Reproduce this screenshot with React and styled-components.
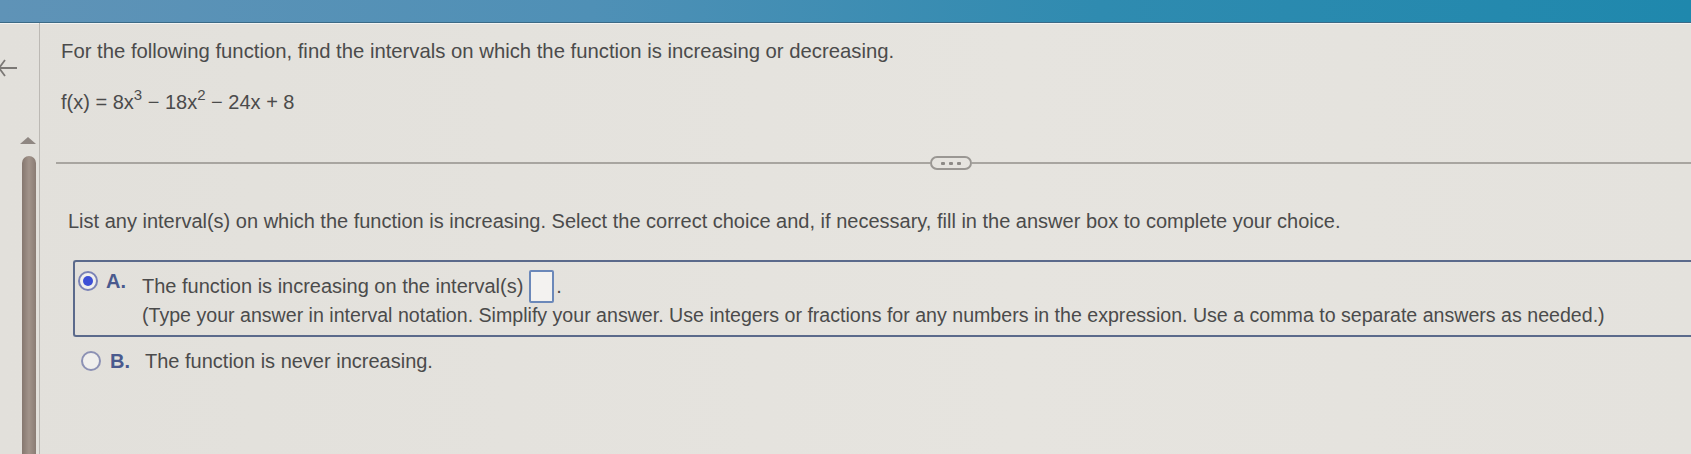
import React from 'react';
import styled, { createGlobalStyle } from 'styled-components';

const Global = createGlobalStyle`
  html, body { margin: 0; padding: 0; height: 100%; }
  body { background: #e4e2dd; font-family: "Liberation Sans", Arial, sans-serif; overflow: hidden; }
  #root { height: 100%; }
`;

const Shell = styled.div`
  width: 1691px;
  height: 454px;
  display: flex;
  flex-direction: column;
  background: linear-gradient(90deg, #e2e0db 0%, #e6e4df 60%, #e4e2dd 100%);
`;

const TopBar = styled.div`
  height: 22px;
  flex-shrink: 0;
  background: linear-gradient(90deg, #5f93b7 0%, #4f90b6 35%, #2f8bb0 65%, #1f88ad 100%);
  border-bottom: 1px solid #3c6a86;
  box-shadow: 0 1px 0 #f4f4f2;
`;

const Body = styled.div`
  flex: 1;
  display: flex;
  min-height: 0;
`;

const Gutter = styled.div`
  width: 40px;
  flex-shrink: 0;
  border-right: 1.5px solid #bcb9b4;
  display: flex;
  flex-direction: column;
  padding-top: 34px;
  box-sizing: border-box;
`;

const BackArrow = styled.div`
  margin-left: -3px;
  width: 22px;
  height: 22px;
`;

const UpTriangle = styled.div`
  margin: 58px 0 0 20px;
  width: 0;
  height: 0;
  border-left: 8px solid transparent;
  border-right: 8px solid transparent;
  border-bottom: 7px solid #8f8782;
`;

const Thumb = styled.div`
  margin: 12px 0 0 22px;
  width: 14px;
  flex: 1;
  border-radius: 7px 7px 0 0;
  background: linear-gradient(90deg, #85776f 0%, #a1938a 50%, #8a7c74 100%);
`;

const Main = styled.div`
  flex: 1;
  min-width: 0;
  padding: 16px 0 0 21px;
  color: #4b4b4b;
  font-size: 20px;
`;

const Prompt = styled.p`
  margin: 0;
  line-height: 24px;
  font-size: 20.3px;
`;

const Formula = styled.p`
  margin: 27px 0 0;
  line-height: 24px;
  sup { font-size: 15px; vertical-align: 9px; line-height: 0; }
`;

const Divider = styled.div`
  display: flex;
  align-items: center;
  margin: 42px 0 0 -5px;
  height: 14px;
`;

const Rule = styled.div`
  flex: ${p => (p.$w ? `0 0 ${p.$w}px` : 1)};
  height: 2px;
  background: #a8a5a0;
`;

const Pill = styled.div`
  width: 38px;
  height: 10px;
  flex-shrink: 0;
  border: 2px solid #9a9793;
  border-radius: 7px;
  display: flex;
  align-items: center;
  justify-content: center;
  gap: 4px;
  span { width: 4px; height: 3px; background: #8d8a86; border-radius: 1px; }
`;

const Question = styled.p`
  margin: 39px 0 0 7px;
  line-height: 24px;
`;

const ChoiceBox = styled.div`
  margin: 27px 0 0 12px;
  border: 2px solid #5b6a8b;
  border-right: none;
  border-radius: 3px 0 0 3px;
  padding: 7px 0 8px 3px;
`;

const Choice = styled.div`
  display: grid;
  grid-template-columns: ${p => (p.$plain ? '29px 35px' : '28px 36px')} 1fr;
  align-items: start;
  margin: ${p => (p.$plain ? '12px 0 0 20px' : '0')};
`;

const Radio = styled.span`
  width: 20px;
  height: 20px;
  border-radius: 50%;
  border: 2px solid ${p => (p.$on ? '#7b83b6' : '#8c91b4')};
  box-sizing: border-box;
  display: flex;
  align-items: center;
  justify-content: center;
  margin-top: ${p => p.$top || 0}px;
  background: #f0efed;
  &::after {
    content: '';
    width: 10px;
    height: 10px;
    border-radius: 50%;
    background: ${p => (p.$on ? '#3c4fd6' : 'transparent')};
  }
`;

const Letter = styled.span`
  color: #4a5a8e;
  font-weight: bold;
  font-size: 20px;
  line-height: 24px;
`;

const ChoiceText = styled.div`
  line-height: 24px;
`;

const FirstLine = styled.div`
  display: flex;
  align-items: center;
  height: 34px;
`;

const Note = styled.div`
  font-size: 19.6px;
  line-height: 24px;
`;

const AnswerBox = styled.span`
  width: 21px;
  height: 29px;
  border: 2px solid #6b88b9;
  border-radius: 2px;
  background: #f3f2f0;
  margin: 0 2px 0 6px;
`;

export default function App() {
  return (
    <Shell>
      <Global />
      <TopBar />
      <Body>
        <Gutter>
          <BackArrow>
            <svg width="22" height="22" viewBox="0 0 22 22">
              <path d="M2 11 H20 M2 11 L8 3 M2 11 L8 19" stroke="#7b7875" strokeWidth="1.8" fill="none" />
            </svg>
          </BackArrow>
          <UpTriangle />
          <Thumb />
        </Gutter>
        <Main>
          <Prompt>For the following function, find the intervals on which the function is increasing or decreasing.</Prompt>
          <Formula>
            f(x) = 8x<sup>3</sup> − 18x<sup>2</sup> − 24x + 8
          </Formula>
          <Divider>
            <Rule $w={874} />
            <Pill><span /><span /><span /></Pill>
            <Rule />
          </Divider>
          <Question>
            List any interval(s) on which the function is increasing. Select the correct choice and, if necessary, fill in the answer box to complete your choice.
          </Question>
          <ChoiceBox>
            <Choice>
              <Radio $on $top={2} />
              <Letter>A.</Letter>
              <ChoiceText>
                <FirstLine>
                  The function is increasing on the interval(s)<AnswerBox />.
                </FirstLine>
                <Note>
                  (Type your answer in interval notation. Simplify your answer. Use integers or fractions for any numbers in the expression. Use a comma to separate answers as needed.)
                </Note>
              </ChoiceText>
            </Choice>
          </ChoiceBox>
          <Choice $plain>
            <Radio $top={2} />
            <Letter>B.</Letter>
            <ChoiceText>The function is never increasing.</ChoiceText>
          </Choice>
        </Main>
      </Body>
    </Shell>
  );
}
